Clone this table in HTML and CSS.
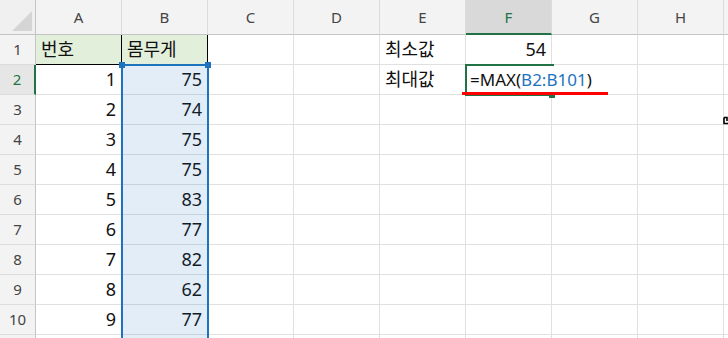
FILE: index.html
```html
<!doctype html>
<html lang="ko">
  <head>
    <meta charset="utf-8" />
    <title>Sheet1</title>
    <link rel="stylesheet" href="styles.css">
  </head>

  <body>
    <div class="sheet">
      <div class="grid">
        <!-- column headers -->
        <div class="corner"><span class="corner-mark"></span></div>
        <div class="col-head">A</div>
        <div class="col-head">B</div>
        <div class="col-head">C</div>
        <div class="col-head">D</div>
        <div class="col-head">E</div>
        <div class="col-head active">F</div>
        <div class="col-head">G</div>
        <div class="col-head">H</div>
        <div class="col-head"></div>

        <!-- row 1 -->
        <div class="row-head">1</div>
        <div class="cell head-cell">번호</div>
        <div class="cell head-cell">몸무게</div>
        <div class="cell"></div>
        <div class="cell"></div>
        <div class="cell">최소값</div>
        <div class="cell num">54</div>
        <div class="cell"></div>
        <div class="cell"></div>
        <div class="cell"></div>

        <!-- row 2 -->
        <div class="row-head active">2</div>
        <div class="cell num">1</div>
        <div class="cell num">75</div>
        <div class="cell"></div>
        <div class="cell"></div>
        <div class="cell">최대값</div>
        <div class="cell editing"><span class="edit-text">=MAX(<span class="ref">B2:B101</span>)</span></div>
        <div class="cell"></div>
        <div class="cell"></div>
        <div class="cell"></div>

        <div class="row-head">3</div>
        <div class="cell num">2</div>
        <div class="cell num">74</div>
        <div class="cell"></div><div class="cell"></div><div class="cell"></div><div class="cell"></div><div class="cell"></div><div class="cell"></div><div class="cell"></div>

        <div class="row-head">4</div>
        <div class="cell num">3</div>
        <div class="cell num">75</div>
        <div class="cell"></div><div class="cell"></div><div class="cell"></div><div class="cell"></div><div class="cell"></div><div class="cell"></div><div class="cell"></div>

        <div class="row-head">5</div>
        <div class="cell num">4</div>
        <div class="cell num">75</div>
        <div class="cell"></div><div class="cell"></div><div class="cell"></div><div class="cell"></div><div class="cell"></div><div class="cell"></div><div class="cell"></div>

        <div class="row-head">6</div>
        <div class="cell num">5</div>
        <div class="cell num">83</div>
        <div class="cell"></div><div class="cell"></div><div class="cell"></div><div class="cell"></div><div class="cell"></div><div class="cell"></div><div class="cell"></div>

        <div class="row-head">7</div>
        <div class="cell num">6</div>
        <div class="cell num">77</div>
        <div class="cell"></div><div class="cell"></div><div class="cell"></div><div class="cell"></div><div class="cell"></div><div class="cell"></div><div class="cell"></div>

        <div class="row-head">8</div>
        <div class="cell num">7</div>
        <div class="cell num">82</div>
        <div class="cell"></div><div class="cell"></div><div class="cell"></div><div class="cell"></div><div class="cell"></div><div class="cell"></div><div class="cell"></div>

        <div class="row-head">9</div>
        <div class="cell num">8</div>
        <div class="cell num">62</div>
        <div class="cell"></div><div class="cell"></div><div class="cell"></div><div class="cell"></div><div class="cell"></div><div class="cell"></div><div class="cell"></div>

        <div class="row-head">10</div>
        <div class="cell num">9</div>
        <div class="cell num">77</div>
        <div class="cell"></div><div class="cell"></div><div class="cell"></div><div class="cell"></div><div class="cell"></div><div class="cell"></div><div class="cell"></div>

        <!-- next row, only its top edge shows -->
        <div class="row-head"></div>
        <div class="cell"></div><div class="cell"></div><div class="cell"></div><div class="cell"></div><div class="cell"></div><div class="cell"></div><div class="cell"></div><div class="cell"></div><div class="cell"></div>
      </div>

      <!-- formula reference range B2:B101 -->
      <div class="range"></div>
      <span class="range-handle left"></span>
      <span class="range-handle right"></span>

      <!-- active cell F2 -->
      <div class="active-cell"></div>
      <span class="fill-handle"></span>
      <div class="squiggle"></div>

      <svg class="pointer" width="6" height="9" viewBox="0 0 6 9">
        <path d="M1 1.5 V7.5 H5" fill="none" stroke="#000" stroke-width="1.6" />
        <path d="M1 1.5 H4 V5" fill="none" stroke="#000" stroke-width="1.6" />
      </svg>
    </div>
  </body>
</html>
```

FILE: styles.css
```css
body {
  margin: 0;
  background-color: #fff;
  overflow: hidden;
  font-family: 'Noto Sans', 'Noto Sans CJK KR', sans-serif;
}

.sheet {
  position: relative;
  width: 728px;
  height: 338px;
  overflow: hidden;
}

.grid {
  display: grid;
  grid-template-columns: 36px repeat(8, 86px) 1fr;
  grid-template-rows: 35px repeat(11, 30px);
}

/* headers */
.corner {
  background-color: #f0f0f0;
  border-right: 1px solid #c4c4c4;
  border-bottom: 1px solid #c4c4c4;
  box-sizing: border-box;
  display: flex;
  align-items: flex-end;
  justify-content: flex-end;
  padding: 0 3px 3px 0;
}

.corner-mark {
  width: 20px;
  height: 20px;
  background-color: #d5d5d5;
  clip-path: polygon(100% 0, 100% 100%, 0 100%);
}

.col-head {
  background-color: #f3f3f3;
  color: #444;
  font-size: 15px;
  text-align: center;
  line-height: 34px;
  border-right: 1px solid #dcdcdc;
  border-bottom: 1px solid #c4c4c4;
  box-sizing: border-box;
}

.col-head.active {
  background-color: #d9d9d9;
  color: #217346;
  border-bottom: 2px solid #217346;
}

.row-head {
  background-color: #f3f3f3;
  color: #444;
  font-size: 15px;
  text-align: center;
  line-height: 29px;
  border-right: 1px solid #c4c4c4;
  border-bottom: 1px solid #dcdcdc;
  box-sizing: border-box;
}

.row-head.active {
  background-color: #e6e6e6;
  color: #217346;
  border-right: 2px solid #217346;
}

/* cells */
.cell {
  font-size: 18px;
  color: #111;
  line-height: 29px;
  padding: 0 5px;
  border-right: 1px solid #e0e0e0;
  border-bottom: 1px solid #e0e0e0;
  box-sizing: border-box;
  white-space: nowrap;
}

.cell.num {
  text-align: right;
}

.cell.head-cell {
  background-color: #e2efda;
  border-right: 1px solid #000;
  border-bottom: 1px solid #000;
}

/* the cell being edited spills over into G2 */
.cell.editing {
  overflow: visible;
  position: relative;
  z-index: 2;
  border-right: none;
  padding: 0;
}

.edit-text {
  display: inline-block;
  margin: 1px 0 0 1px;
  padding: 0 4px 0 3px;
  font-size: 17px;
  line-height: 27px;
  background-color: #fff;
}

.ref {
  color: #1e73be;
}

/* overlays */
.range {
  position: absolute;
  left: 121px;
  top: 64px;
  width: 88px;
  height: 300px;
  box-sizing: border-box;
  border: 2px solid #1e73be;
  background-color: rgba(30, 115, 190, 0.13);
  z-index: 1;
}

.range-handle {
  position: absolute;
  top: 62px;
  width: 6px;
  height: 6px;
  background-color: #1e73be;
  z-index: 1;
}

.range-handle.left {
  left: 119px;
}

.range-handle.right {
  left: 205px;
}

.active-cell {
  position: absolute;
  left: 465px;
  top: 64px;
  width: 89px;
  height: 32px;
  box-sizing: border-box;
  border: 2px solid #217346;
  z-index: 1;
}

.fill-handle {
  position: absolute;
  left: 549px;
  top: 93px;
  width: 6px;
  height: 5px;
  background-color: #217346;
  z-index: 1;
}

.squiggle {
  position: absolute;
  left: 462px;
  top: 92px;
  width: 146px;
  height: 3px;
  background-color: #f00;
  z-index: 3;
}

.pointer {
  position: absolute;
  left: 723px;
  top: 116px;
  z-index: 3;
}
```
